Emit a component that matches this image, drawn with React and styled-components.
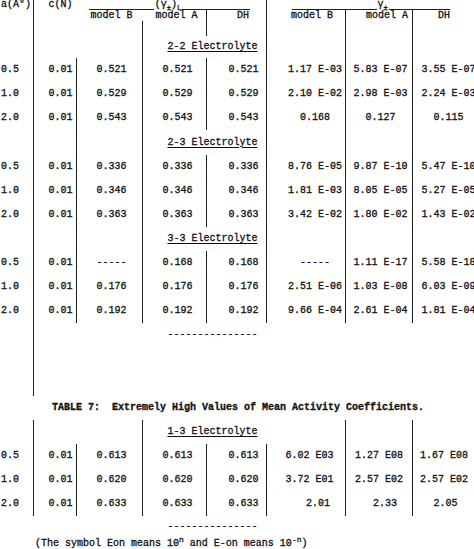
import React from 'react';
import styled, { createGlobalStyle } from 'styled-components';

const Global = createGlobalStyle`
  html, body { margin: 0; padding: 0; background: #ffffff; }
  body { overflow: hidden; }
`;

const COLS = '33px 43px 66px 64px 60px 79px 67px 62px';
const INK = '#111111';
const RULE = '#1e1e1e';

const Page = styled.div`
  width: 474px;
  height: 549px;
  overflow: hidden;
  font-family: 'Liberation Mono', 'DejaVu Sans Mono', monospace;
  font-size: 10px;
  line-height: 10px;
  color: ${INK};
  -webkit-text-stroke: 0.3px ${INK};
  display: flex;
  flex-direction: column;
`;

const Row = styled.div`
  display: grid;
  grid-template-columns: ${COLS};
  height: ${(p) => p.$h}px;
  flex: none;
`;

const Cell = styled.div`
  grid-column: ${(p) => (p.$span ? `span ${p.$span}` : 'auto')};
  display: flex;
  align-items: center;
  justify-content: ${(p) => (p.$left ? 'flex-start' : 'center')};
  padding-left: ${(p) => Math.max(0, p.$pl || 0)}px;
  padding-right: ${(p) => Math.max(0, -(p.$pl || 0))}px;
  border-left: ${(p) => (p.$line ? `1px solid ${RULE}` : '1px solid transparent')};
  white-space: nowrap;
  min-width: 0;
`;

const GroupHead = styled.div`
  grid-column: span ${(p) => p.$span};
  display: flex;
  align-items: flex-start;
  padding-left: ${(p) => p.$pl}px;
  padding-right: ${(p) => p.$pr}px;
  border-left: ${(p) => (p.$line ? `1px solid ${RULE}` : '1px solid transparent')};
`;

const HeadRule = styled.div`
  flex: ${(p) => p.$grow};
  height: 9px;
  border-bottom: 1px solid ${RULE};
`;

const Gamma = styled.span`
  flex: none;
  line-height: 9px;
  padding: 0 1px;
  white-space: nowrap;
`;

const Sub = styled.span`
  display: inline-block;
  font-size: 7px;
  line-height: 7px;
  transform: translateY(3px);
`;

const Sup = styled.span`
  display: inline-block;
  font-size: 8px;
  line-height: 8px;
  transform: translateY(-4px);
`;

const Electrolyte = styled.span`
  text-decoration: underline;
  text-underline-offset: 2px;
  text-decoration-thickness: 1px;
`;

const Title = styled.div`
  height: ${(p) => p.$h}px;
  flex: none;
  display: flex;
  align-items: center;
  padding-left: 52px;
  font-weight: 700;
  white-space: pre;
`;

const Note = styled.div`
  height: 11px;
  flex: none;
  display: flex;
  align-items: center;
  padding-left: 35px;
  white-space: pre;
`;

const UPPER_PL = [0, 11, 4, 6, 14, 18, 3, 10];
const ALL_LINES = [false, true, true, true, true, true, true, true];

const sections = [
  {
    name: '2-2 Electrolyte',
    h: 22,
    rows: [
      ['0.5', '0.01', '0.521', '0.521', '0.521', '1.17 E-03', '5.83 E-07', '3.55 E-07'],
      ['1.0', '0.01', '0.529', '0.529', '0.529', '2.10 E-02', '2.98 E-03', '2.24 E-03'],
      ['2.0', '0.01', '0.543', '0.543', '0.543', '0.168', '0.127', '0.115'],
    ],
  },
  {
    name: '2-3 Electrolyte',
    h: 25,
    rows: [
      ['0.5', '0.01', '0.336', '0.336', '0.336', '8.76 E-05', '9.87 E-10', '5.47 E-10'],
      ['1.0', '0.01', '0.346', '0.346', '0.346', '1.81 E-03', '8.05 E-05', '5.27 E-05'],
      ['2.0', '0.01', '0.363', '0.363', '0.363', '3.42 E-02', '1.80 E-02', '1.43 E-02'],
    ],
  },
  {
    name: '3-3 Electrolyte',
    h: 24,
    rows: [
      ['0.5', '0.01', '-----', '0.168', '0.168', '-----', '1.11 E-17', '5.58 E-18'],
      ['1.0', '0.01', '0.176', '0.176', '0.176', '2.51 E-06', '1.03 E-08', '6.03 E-09'],
      ['2.0', '0.01', '0.192', '0.192', '0.192', '9.66 E-04', '2.61 E-04', '1.81 E-04'],
    ],
  },
];

const lower = [
  { pl: [0, 11, 4, 6, 14, 7, 0, 1], v: ['0.5', '0.01', '0.613', '0.613', '0.613', '6.02 E03', '1.27 E08', '1.67 E08'] },
  { pl: [0, 11, 4, 6, 14, 7, 0, 1], v: ['1.0', '0.01', '0.620', '0.620', '0.620', '3.72 E01', '2.57 E02', '2.57 E02'] },
  { pl: [0, 11, 4, 6, 14, 24, 12, 4], v: ['2.0', '0.01', '0.633', '0.633', '0.633', '2.01', '2.33', '2.05'] },
];

function DataRow({ values, pl, h = 24 }) {
  return (
    <Row $h={h}>
      {values.map((v, i) => (
        <Cell key={i} $left={i === 0} $pl={pl[i]} $line={ALL_LINES[i]}>
          {v}
        </Cell>
      ))}
    </Row>
  );
}

function SectionHead({ name, h, lines }) {
  return (
    <Row $h={h}>
      <Cell />
      <Cell $line />
      <Cell $line={lines.c} />
      <Cell $span={2} $line $pl={16}>
        <Electrolyte>{name}</Electrolyte>
      </Cell>
      <Cell $line={lines.mb} />
      <Cell $line />
      <Cell $line />
    </Row>
  );
}

export default function App() {
  return (
    <Page>
      <Global />
      <Row $h={10}>
        <Cell $left>a(A°)</Cell>
        <Cell $line $pl={11}>c(N)</Cell>
        <GroupHead $span={3} $pl={12} $pr={16}>
          <HeadRule $grow={1} />
          <Gamma>
            (γ<Sub>±</Sub>)<Sub>L</Sub>
          </Gamma>
          <HeadRule $grow={1.05} />
        </GroupHead>
        <GroupHead $span={3} $line $pl={25} $pr={24}>
          <HeadRule $grow={80} />
          <Gamma>
            γ<Sub>±</Sub>
          </Gamma>
          <HeadRule $grow={58} />
        </GroupHead>
      </Row>
      <Row $h={11}>
        <Cell />
        <Cell $line />
        <Cell $pl={4}>model B</Cell>
        <Cell $pl={4}>model A</Cell>
        <Cell $line $pl={13}>DH</Cell>
        <Cell $line $pl={12}>model B</Cell>
        <Cell $line $pl={16}>model A</Cell>
        <Cell $line $pl={1}>DH</Cell>
      </Row>
      <Row $h={15}>
        <Cell />
        <Cell $line />
        <Cell />
        <Cell $line />
        <Cell $line />
        <Cell $line />
        <Cell $line />
        <Cell $line />
      </Row>

      {sections.map((s, si) => (
        <React.Fragment key={s.name}>
          <SectionHead name={s.name} h={s.h} lines={{ c: si > 0, mb: true }} />
          {s.rows.map((r, ri) => (
            <DataRow key={ri} values={r} pl={UPPER_PL} />
          ))}
        </React.Fragment>
      ))}

      <Row $h={24}>
        <Cell />
        <Cell $line />
        <Cell />
        <Cell $span={2} $pl={16}>---------------</Cell>
      </Row>
      <Row $h={49}>
        <Cell />
        <Cell $line />
      </Row>

      <Title $h={24}>TABLE 7:  Extremely High Values of Mean Activity Coefficients.</Title>

      <Row $h={24}>
        <Cell />
        <Cell $line />
        <Cell />
        <Cell $span={2} $line $pl={16}>
          <Electrolyte>1-3 Electrolyte</Electrolyte>
        </Cell>
        <Cell />
        <Cell $line />
        <Cell $line />
      </Row>
      {lower.map((r, i) => (
        <DataRow key={i} values={r.v} pl={r.pl} />
      ))}
      <Row $h={22}>
        <Cell />
        <Cell />
        <Cell />
        <Cell $span={2} $pl={16}>---------------</Cell>
      </Row>
      <Note>
        (The symbol Eon means 10<Sup>n</Sup> and E-on means 10<Sup>-n</Sup>)
      </Note>
    </Page>
  );
}
